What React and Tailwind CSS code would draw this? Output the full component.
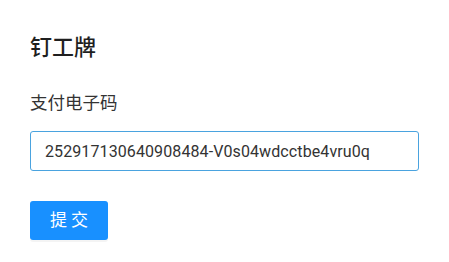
import React, { useState } from "react";

const App = () => {
  const [code, setCode] = useState("252917130640908484-V0s04wdcctbe4vru0q");

  return (
    <div className="min-h-screen bg-white px-[30px] pt-[33px] font-['Roboto','Noto_Sans_CJK_SC',sans-serif] text-[#262626]">
      <h1 className="text-[22px] font-medium leading-[30px] text-[#1f1f1f]">钉工牌</h1>
      <div className="mt-[28px] text-[17.5px] leading-[24px] text-[#333]">支付电子码</div>
      <input
        value={code}
        onChange={(e) => setCode(e.target.value)}
        className="mt-[16px] block h-[40px] w-[389px] rounded-[3px] border border-[#4aa3df] px-[14px] text-[16px] tracking-[0.1px] text-[#333] outline-none"
      />
      <button className="mt-[30px] block h-[39px] w-[78px] rounded-[3px] bg-[#1890ff] text-[17px] text-white shadow-[0_2px_0_rgba(0,0,0,0.045)]">
        提 交
      </button>
    </div>
  );
};

export default App;
